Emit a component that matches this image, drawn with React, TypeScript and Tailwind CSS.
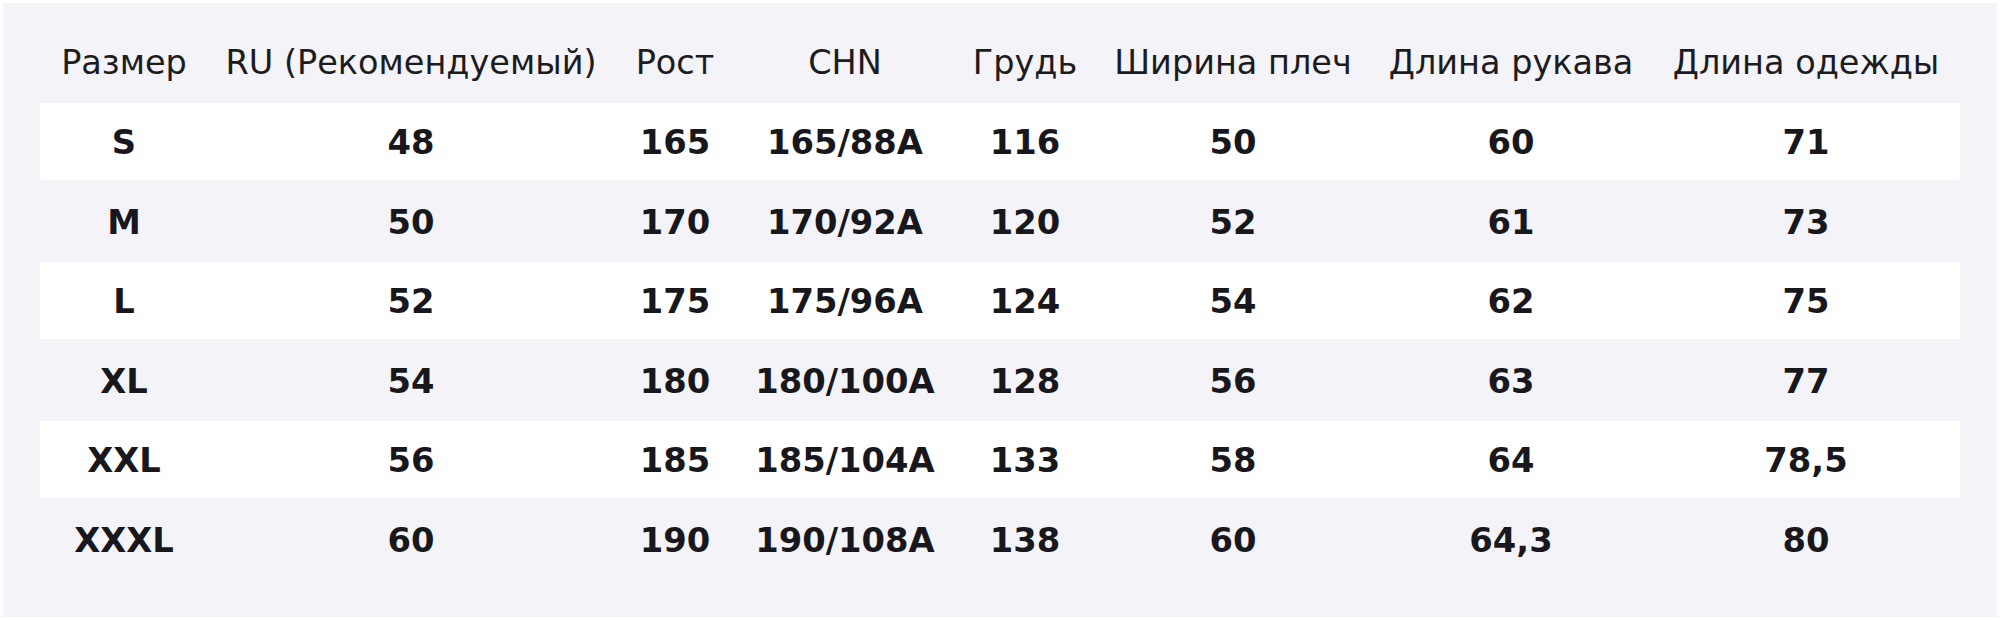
const headers = [
  'Размер',
  'RU (Рекомендуемый)',
  'Рост',
  'CHN',
  'Грудь',
  'Ширина плеч',
  'Длина рукава',
  'Длина одежды',
];

const rows = [
  ['S', '48', '165', '165/88A', '116', '50', '60', '71'],
  ['M', '50', '170', '170/92A', '120', '52', '61', '73'],
  ['L', '52', '175', '175/96A', '124', '54', '62', '75'],
  ['XL', '54', '180', '180/100A', '128', '56', '63', '77'],
  ['XXL', '56', '185', '185/104A', '133', '58', '64', '78,5'],
  ['XXXL', '60', '190', '190/108A', '138', '60', '64,3', '80'],
];

const cols = 'grid grid-cols-[168px_406px_122px_218px_142px_274px_282px_308px]';

export default function App() {
  return (
    <div className="w-[2000px] h-[620px] bg-white p-[3px] font-['DejaVu_Sans',sans-serif]">
      <div className="h-[614px] bg-[#f3f3f8] px-[37px] pt-[21px]">
        {/* Header */}
        <div className={`${cols} h-[79px] items-center text-[33.5px] text-[#1c1c1f]`}>
          {headers.map((h) => (
            <div key={h} className="text-center whitespace-nowrap">
              {h}
            </div>
          ))}
        </div>

        {/* Body rows: white stripes are a little shorter than the grey ones */}
        {rows.map((row, i) => (
          <div
            key={row[0]}
            className={`${cols} items-center pt-[4px] text-[33.75px] font-bold text-[#17171c] ${
              i % 2 === 0 ? 'h-[77px] bg-white' : 'h-[82px] bg-transparent'
            }`}
          >
            {row.map((cell, j) => (
              <div key={j} className="text-center whitespace-nowrap">
                {cell}
              </div>
            ))}
          </div>
        ))}
      </div>
    </div>
  );
}
